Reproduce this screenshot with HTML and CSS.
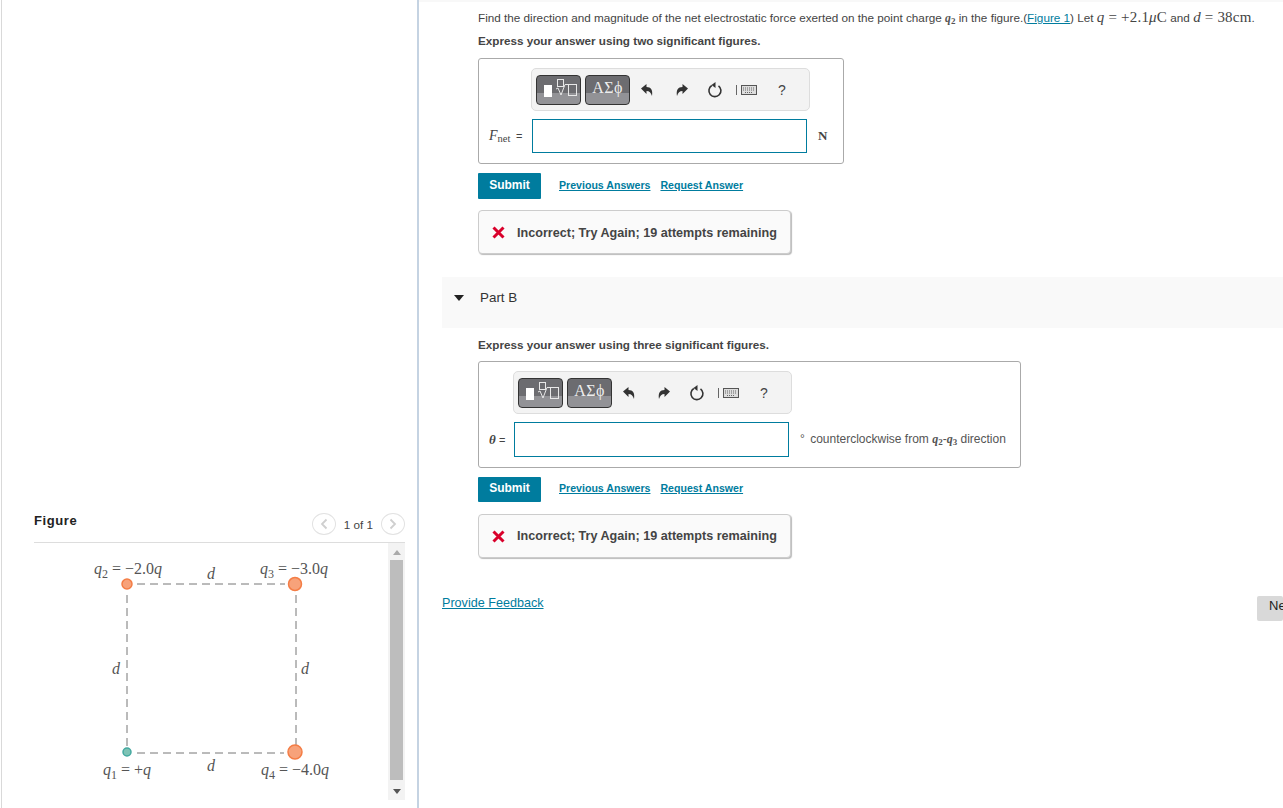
FILE: index.html
```html
<!DOCTYPE html>
<html lang="en">
<head>
<meta charset="utf-8">
<title>Part B</title>
<link rel="stylesheet" href="styles.css">
</head>
<body>
<div class="app">
  <aside class="left">
    <div class="fig-head">
      <span class="fig-title">Figure</span>
      <div class="pager">
        <span class="circle"><svg width="8" height="12" viewBox="0 0 8 12"><path d="M6.500 1.500 2 6l4.500 4.500" class="chev"/></svg></span>
        <span class="count">1 of 1</span>
        <span class="circle"><svg width="8" height="12" viewBox="0 0 8 12"><path d="M1.500 1.500 6 6l-4.500 4.500" class="chev"/></svg></span>
      </div>
    </div>
    <div class="fig-body">
      <svg class="diagram" width="388" height="265" viewBox="0 0 388 265">
        <path class="dash" d="M137 41H285M127 52V203M296 52V203M137 210H284"/>
        <circle cx="127" cy="41" r="5" class="neg"/>
        <circle cx="295" cy="41" r="6.500" class="neg"/>
        <circle cx="127" cy="209" r="4" class="pos"/>
        <circle cx="295" cy="209" r="7" class="neg"/>
        <text x="94" y="31" class="m">q<tspan class="sub" dy="4">2</tspan><tspan class="up" dy="-4"> = −2.0</tspan><tspan>q</tspan></text>
        <text x="207" y="36" class="m">d</text>
        <text x="260" y="31" class="m">q<tspan class="sub" dy="4">3</tspan><tspan class="up" dy="-4"> = −3.0</tspan><tspan>q</tspan></text>
        <text x="112" y="131" class="m">d</text>
        <text x="301" y="131" class="m">d</text>
        <text x="103" y="232" class="m">q<tspan class="sub" dy="4">1</tspan><tspan class="up" dy="-4"> = +</tspan><tspan>q</tspan></text>
        <text x="207" y="228" class="m">d</text>
        <text x="261" y="232" class="m">q<tspan class="sub" dy="4">4</tspan><tspan class="up" dy="-4"> = −4.0</tspan><tspan>q</tspan></text>
      </svg>
      <div class="scrollbar">
        <span class="arrow-up"></span>
        <span class="thumb"></span>
        <span class="arrow-down"></span>
      </div>
    </div>
  </aside>
  <main class="right">
    <p class="prompt">Find the direction and magnitude of the net electrostatic force exerted on the point charge <i class="v">q</i><sub class="s">2</sub> in the figure.(<a href="#">Figure 1</a>) Let <span class="math"><i>q</i> = +2.1<i>μ</i>C</span> and <span class="math"><i>d</i> = 38cm</span>.</p>
    <p class="instr first">Express your answer using two significant figures.</p>

    <div class="box box-a">
      <div class="toolbar">
        <span class="tbtn t1"><svg width="43" height="28" viewBox="0 1 43 28"><rect x="7" y="10" width="8" height="12" class="sq"/><rect x="20.500" y="4.500" width="6" height="7" class="ic"/><path d="M19 14l2-1 3 7 4-10.500h12" class="ic"/><rect x="31.500" y="9.500" width="8" height="11" class="ic"/></svg></span>
        <span class="tbtn t2">ΑΣϕ</span>
        <span class="tools">
          <svg class="tool" width="14" height="14" viewBox="0 0 14 14"><path d="M1 5.500 6.500 1v3C11 4 13 7 12 13 10.800 9.500 9.500 8 6.500 8v3z"/></svg>
          <svg class="tool r" width="14" height="14" viewBox="0 0 14 14"><path d="M13 5.500 7.500 1v3C3 4 1 7 2 13 3.200 9.500 4.500 8 7.500 8v3z"/></svg>
          <svg class="reset" width="16" height="16" viewBox="0 0 16 16"><path class="ring" d="M4.800 3.500A6 6 0 1 0 11.500 3.800"/><path d="M8.500 0v6L4.500 3z"/></svg>
          <span class="bar"></span>
          <svg class="kb" width="16" height="10" viewBox="0 0 16 10"><rect x=".5" y=".5" width="15" height="9" class="kbo"/><path class="kbk" d="M2 3h12M2 5h12M4 7.500h8"/></svg>
          <span class="help">?</span>
        </span>
      </div>
      <div class="answer">
        <span class="label"><i>F</i><sub class="lsub">net</sub> <span class="eq">=</span></span>
        <span class="input"></span>
        <span class="unit">N</span>
      </div>
    </div>
    <div class="actions">
      <button class="submit">Submit</button>
      <a href="#" class="alink">Previous Answers</a>
      <a href="#" class="alink">Request Answer</a>
    </div>
    <div class="feedback fb-a">
      <svg width="13" height="13" viewBox="0 0 13 13"><path class="x" d="M1.500 1.500 11.500 11.500M11.500 1.500 1.500 11.500"/></svg>
      <span>Incorrect; Try Again; 19 attempts remaining</span>
    </div>

    <div class="part">
      <svg width="10" height="6" viewBox="0 0 10 6"><path d="M0 0h10L5 6z"/></svg>
      <span>Part B</span>
    </div>
    <p class="instr second">Express your answer using three significant figures.</p>

    <div class="box box-b">
      <div class="toolbar">
        <span class="tbtn t1"><svg width="43" height="28" viewBox="0 1 43 28"><rect x="7" y="10" width="8" height="12" class="sq"/><rect x="20.500" y="4.500" width="6" height="7" class="ic"/><path d="M19 14l2-1 3 7 4-10.500h12" class="ic"/><rect x="31.500" y="9.500" width="8" height="11" class="ic"/></svg></span>
        <span class="tbtn t2">ΑΣϕ</span>
        <span class="tools">
          <svg class="tool" width="14" height="14" viewBox="0 0 14 14"><path d="M1 5.500 6.500 1v3C11 4 13 7 12 13 10.800 9.500 9.500 8 6.500 8v3z"/></svg>
          <svg class="tool r" width="14" height="14" viewBox="0 0 14 14"><path d="M13 5.500 7.500 1v3C3 4 1 7 2 13 3.200 9.500 4.500 8 7.500 8v3z"/></svg>
          <svg class="reset" width="16" height="16" viewBox="0 0 16 16"><path class="ring" d="M4.800 3.500A6 6 0 1 0 11.500 3.800"/><path d="M8.500 0v6L4.500 3z"/></svg>
          <span class="bar"></span>
          <svg class="kb" width="16" height="10" viewBox="0 0 16 10"><rect x=".5" y=".5" width="15" height="9" class="kbo"/><path class="kbk" d="M2 3h12M2 5h12M4 7.500h8"/></svg>
          <span class="help">?</span>
        </span>
      </div>
      <div class="answer">
        <span class="label theta"><i>θ</i> <span class="eq">=</span></span>
        <span class="input"></span>
        <span class="unit2"><span class="deg">°</span> counterclockwise from <i class="v">q</i><sub class="s">2</sub>-<i class="v">q</i><sub class="s">3</sub> direction</span>
      </div>
    </div>
    <div class="actions second-actions">
      <button class="submit">Submit</button>
      <a href="#" class="alink">Previous Answers</a>
      <a href="#" class="alink">Request Answer</a>
    </div>
    <div class="feedback fb-b">
      <svg width="13" height="13" viewBox="0 0 13 13"><path class="x" d="M1.500 1.500 11.500 11.500M11.500 1.500 1.500 11.500"/></svg>
      <span>Incorrect; Try Again; 19 attempts remaining</span>
    </div>

    <div class="foot">
      <a href="#" class="feed">Provide Feedback</a>
      <span class="next">Next</span>
    </div>
  </main>
</div>
</body>
</html>
```
FILE: styles.css
```css
* { box-sizing: border-box; }
html, body { margin: 0; height: 100%; overflow: hidden; background: #fff; }
body { font-family: "Liberation Sans", Arial, sans-serif; font-size: 12px; color: #333; }
a { color: #007c9e; }
p { margin: 0; }

.app { display: flex; width: 1283px; height: 808px; overflow: hidden; }

.left {
  width: 418px; flex: none; height: 808px;
  margin-left: 1px;
  border-left: 1px solid #d9d9d9;
  border-right: 2px solid #c5d3e2;
  padding: 0 12px 0 32px;
  display: flex; flex-direction: column; justify-content: flex-end;
}
.fig-head {
  height: 39px; display: flex; align-items: flex-start; justify-content: space-between;
  border-bottom: 1px solid #ddd; padding-top: 9px;
}
.fig-title { font-size: 13px; font-weight: bold; color: #222; letter-spacing: .6px; }
.pager { display: flex; align-items: center; gap: 8px; color: #444; }
.count { font-size: 11.700px; padding-top: 1px; }
.circle {
  width: 24px; height: 22px; border: 1px solid #e2e2e2; border-radius: 50%;
  display: flex; align-items: center; justify-content: center;
}
.chev { fill: none; stroke: #cfcfcf; stroke-width: 1.800; }

.fig-body { height: 265px; display: flex; }
.diagram { flex: none; margin-left: -34px; }
.dash { fill: none; stroke: #777; stroke-width: 1; stroke-dasharray: 8 5; }
.neg { fill: #f7a27a; stroke: #f47d45; stroke-width: 1.500; }
.pos { fill: #7ec3b5; stroke: #44a9a0; stroke-width: 1.500; }
.m { font-family: "Liberation Serif", serif; font-style: italic; font-size: 16px; fill: #555; }
.sub { font-style: normal; font-size: 12px; }
.up { font-style: normal; }

.scrollbar {
  width: 17px; height: 257px; background: #f3f3f3; flex: none;
  display: flex; flex-direction: column; align-items: center;
}
.arrow-up { width: 0; height: 0; margin: 7px 0 5px; border: 4px solid transparent; border-top: 0; border-bottom: 5px solid #aaa; }
.thumb { width: 13px; height: 220px; background: #bdbdbd; flex: none; }
.arrow-down { width: 0; height: 0; margin-top: 9px; border: 4px solid transparent; border-bottom: 0; border-top: 5px solid #555; }

.right { flex: 1; min-width: 0; padding-left: 23px; overflow: hidden; border-top: 2px solid #f8f8f8; }
.prompt { margin: 8px 0 0 36px; line-height: 14px; white-space: nowrap; height: 14px; color: #444; font-size: 11.720px; }
.v { font-family: "Liberation Serif", serif; font-weight: bold; color: #555; }
.s { font-family: "Liberation Serif", serif; font-size: 9px; font-weight: bold; color: #555; vertical-align: -2px; line-height: 0; }
.math { font-family: "Liberation Serif", serif; font-size: 15px; letter-spacing: .2px; color: #444; }
.instr { margin-left: 36px; font-weight: bold; font-size: 11.700px; line-height: 14px; color: #444; }
.first { margin-top: 10px; }
.second { margin-top: 10px; }

.box { margin-left: 36px; border: 1px solid #aaa; border-radius: 3px; }
.box-a { width: 366px; height: 106px; margin-top: 10px; padding: 9px 0 0 52px; }
.box-b { width: 543px; height: 107px; margin-top: 9px; padding: 9px 0 0 34px; }

.toolbar {
  width: 279px; height: 43px; background: #f3f3f3; border: 1px solid #ddd; border-radius: 5px;
  display: flex; align-items: center; padding-left: 4px; gap: 4px;
}
.tbtn {
  height: 30px; border: 1px solid #333; border-radius: 4px; flex: none;
  background: linear-gradient(#6c6c70 0 60%, #929296 60%);
  color: #fff; display: flex; align-items: center; justify-content: center;
}
.t1 { width: 45px; }
.t1 svg { flex: none; display: block; }
.sq { fill: #fff; }
.ic { fill: none; stroke: #e8e8e8; stroke-width: 1; }
.t2 { width: 45px; font-family: "Liberation Serif", serif; font-size: 16px; letter-spacing: .4px; padding-bottom: 3px; color: #eee; }
.tools { display: flex; align-items: center; margin-left: 6px; }
.tool { fill: #333; flex: none; }
.tool.r { margin-left: 21px; }
.reset { margin-left: 18px; flex: none; fill: #333; }
.ring { fill: none; stroke: #333; stroke-width: 1.600; }
.bar { width: 1px; height: 10px; background: #666; margin-left: 13px; flex: none; }
.kb { margin-left: 4px; flex: none; }
.kbo { fill: #ddd; stroke: #555; }
.kbk { stroke: #666; stroke-width: 1; stroke-dasharray: 1 1; fill: none; }
.help { margin-left: 21px; font-size: 14px; color: #444; }

.answer { display: flex; align-items: center; margin-top: 8px; }
.box-a .answer { margin-left: -42px; }
.box-b .answer { margin-left: -24px; }
.label { width: 43px; font-family: "Liberation Serif", serif; font-size: 14px; color: #444; white-space: nowrap; flex: none; }
.theta { width: 25px; font-weight: bold; font-size: 13px; }
.lsub { font-size: 10.500px; vertical-align: -2px; line-height: 0; }
.eq { font-family: "Liberation Sans", sans-serif; font-size: 11px; font-weight: normal; margin-left: 2px; }
.theta .eq { margin-left: 0; }
.input { width: 275px; height: 34px; border: 1.500px solid #007c9e; background: #fff; flex: none; }
.box-b .input { height: 35px; }
.unit { margin-left: 11px; font-family: "Liberation Serif", serif; font-weight: bold; font-size: 13px; color: #444; }
.unit2 { margin-left: 11px; font-size: 12px; color: #555; white-space: nowrap; }
.deg { margin-right: 2px; }

.actions { margin: 9px 0 0 36px; display: flex; align-items: center; height: 26px; }
.second-actions { height: 25px; }
.submit {
  width: 63px; height: 100%; background: #007c9e; color: #fff; border: 0; border-radius: 1px; padding: 0 0 2px;
  font: bold 12px "Liberation Sans", sans-serif;
}
.second-actions .submit { padding-bottom: 4px; }
.alink { font-size: 10.600px; font-weight: bold; margin-left: 10px; padding-bottom: 3px; }
.submit + .alink { margin-left: 18px; }

.feedback {
  margin: 11px 0 0 36px; width: 313px; height: 44px; background: #fafafa;
  border: 1px solid #ccc; border-radius: 4px; box-shadow: 1px 1px 1px #bbb;
  display: flex; align-items: center; gap: 12px; padding-left: 13px;
  font-size: 12.600px; font-weight: bold; color: #444;
}
.fb-a { padding-top: 1px; }
.fb-b { margin-top: 12px; }
.x { stroke: #d9002b; stroke-width: 3; fill: none; }

.part {
  margin-top: 23px; height: 51px; background: #f9f9f9;
  display: flex; align-items: flex-start; padding: 13px 0 0 12px; gap: 16px;
  font-size: 13.400px; color: #333;
}
.part svg { fill: #222; flex: none; margin-top: 5px; }

.foot { margin-top: 38px; display: flex; align-items: flex-start; justify-content: space-between; }
.feed { font-size: 12.600px; line-height: 14px; }
.next {
  width: 26px; height: 25px; background: #d9d9d9; border-radius: 2px;
  overflow: hidden; padding-left: 12px; line-height: 20px; font-size: 13px; color: #222; white-space: nowrap;
}
```
